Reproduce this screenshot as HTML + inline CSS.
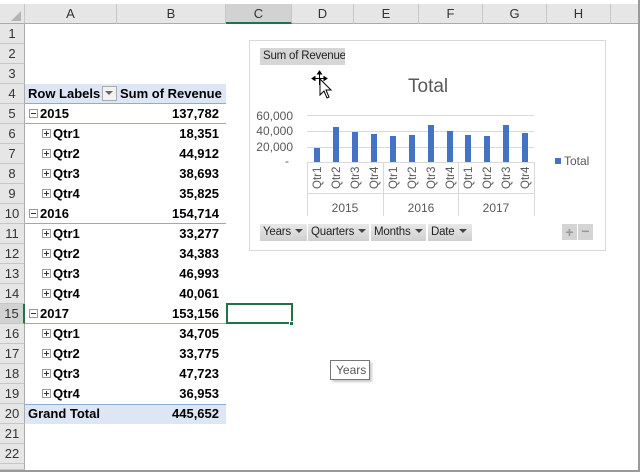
<!DOCTYPE html>
<html><head><meta charset="utf-8"><style>
*{margin:0;padding:0;box-sizing:border-box}
body{width:640px;height:472px;overflow:hidden;background:#fff;font-family:"Liberation Sans",Arial,sans-serif;position:relative}
.a{position:absolute}
.ch{position:absolute;top:4px;height:20px;background:#e6e6e6;border-right:1px solid #c6c6c6;border-bottom:1px solid #ababab;font-size:13px;color:#333;text-align:center;line-height:20px}
.rh{position:absolute;left:0;width:25px;height:20px;background:#e6e6e6;border-bottom:1px solid #c6c6c6;border-right:1px solid #ababab;font-size:13px;color:#333;text-align:center;line-height:20px}
.c{position:absolute;height:20px;line-height:20px;font-size:13px;font-weight:bold;color:#000;white-space:nowrap}
.v{position:absolute;left:117px;width:102px;text-align:right;height:20px;line-height:20px;font-size:13px;font-weight:bold}
.bx{display:inline-block;width:9px;height:9px;border:1px solid #999;position:relative;vertical-align:0;margin-right:2px;background:#fff}
.bx:before{content:"";position:absolute;left:1px;top:3px;width:5px;height:1px;background:#333}
.bx.p:after{content:"";position:absolute;left:3px;top:1px;width:1px;height:5px;background:#333}
.btn{position:absolute;top:224px;height:17px;background:linear-gradient(#e8e8e8,#d0d0d0);font-size:11.5px;line-height:17px;padding-left:3px;color:#222;white-space:nowrap;overflow:hidden;letter-spacing:-0.2px}
.tri{display:inline-block;width:0;height:0;border-left:4px solid transparent;border-right:4px solid transparent;border-top:4px solid #444;margin-left:4px;vertical-align:2px}
</style></head><body>
<div class="ch" style="left:0;width:25px;background:#e6e6e6"></div>
<svg class="a" style="left:10px;top:10px" width="12" height="12"><polygon points="11,1 11,11 1,11" fill="#b4b4b4"/></svg>
<div class="ch" style="left:25px;width:92px">A</div>
<div class="ch" style="left:117px;width:109px">B</div>
<div class="ch" style="left:226px;width:66px;background:#d2d2d2;border-bottom:2px solid #217346">C</div>
<div class="ch" style="left:292px;width:62px">D</div>
<div class="ch" style="left:354px;width:65px">E</div>
<div class="ch" style="left:419px;width:64px">F</div>
<div class="ch" style="left:483px;width:64px">G</div>
<div class="ch" style="left:547px;width:64px">H</div>
<div class="ch" style="left:611px;width:29px"></div>

<div class="rh" style="top:24px">1</div><div class="rh" style="top:44px">2</div><div class="rh" style="top:64px">3</div><div class="rh" style="top:84px">4</div><div class="rh" style="top:104px">5</div><div class="rh" style="top:124px">6</div><div class="rh" style="top:144px">7</div><div class="rh" style="top:164px">8</div><div class="rh" style="top:184px">9</div><div class="rh" style="top:204px">10</div><div class="rh" style="top:224px">11</div><div class="rh" style="top:244px">12</div><div class="rh" style="top:264px">13</div><div class="rh" style="top:284px">14</div><div class="rh" style="top:304px;background:#d2d2d2;border-right:2px solid #217346">15</div><div class="rh" style="top:324px">16</div><div class="rh" style="top:344px">17</div><div class="rh" style="top:364px">18</div><div class="rh" style="top:384px">19</div><div class="rh" style="top:404px">20</div><div class="rh" style="top:424px">21</div><div class="rh" style="top:444px">22</div><div class="rh" style="top:464px;height:6px"></div>
<div class="a" style="left:0;top:470px;width:640px;height:2px;background:#9a9a9a"></div>
<div class="a" style="left:638px;top:0;width:2px;height:472px;background:#9a9a9a"></div>

<div class="a" style="left:25px;top:84px;width:201px;height:20px;background:#dce6f4;border-bottom:1px solid #8ea9db"></div>
<div class="c" style="left:28px;top:84px">Row Labels</div>
<div class="a" style="left:102px;top:86px;width:15px;height:15px;border:1px solid #aaa;background:#f2f2f2"><span class="tri" style="margin:4px 0 0 2px;vertical-align:top;border-top-color:#666"></span></div>
<div class="c" style="left:120px;top:84px">Sum of Revenue</div>

<div class="a" style="left:25px;top:123px;width:201px;height:1px;background:#8ea9db"></div>
<div class="a" style="left:25px;top:223px;width:201px;height:1px;background:#8ea9db"></div>
<div class="a" style="left:25px;top:323px;width:201px;height:1px;background:#8ea9db"></div>
<div class="a" style="left:25px;top:404px;width:201px;height:20px;background:#dce6f4;border-top:1px solid #8ea9db"></div>

<div class="c" style="left:29px;top:104px"><span class="bx"></span>2015</div><div class="v" style="top:104px">137,782</div>
<div class="c" style="left:42px;top:124px"><span class="bx p"></span>Qtr1</div><div class="v" style="top:124px">18,351</div>
<div class="c" style="left:42px;top:144px"><span class="bx p"></span>Qtr2</div><div class="v" style="top:144px">44,912</div>
<div class="c" style="left:42px;top:164px"><span class="bx p"></span>Qtr3</div><div class="v" style="top:164px">38,693</div>
<div class="c" style="left:42px;top:184px"><span class="bx p"></span>Qtr4</div><div class="v" style="top:184px">35,825</div>
<div class="c" style="left:29px;top:204px"><span class="bx"></span>2016</div><div class="v" style="top:204px">154,714</div>
<div class="c" style="left:42px;top:224px"><span class="bx p"></span>Qtr1</div><div class="v" style="top:224px">33,277</div>
<div class="c" style="left:42px;top:244px"><span class="bx p"></span>Qtr2</div><div class="v" style="top:244px">34,383</div>
<div class="c" style="left:42px;top:264px"><span class="bx p"></span>Qtr3</div><div class="v" style="top:264px">46,993</div>
<div class="c" style="left:42px;top:284px"><span class="bx p"></span>Qtr4</div><div class="v" style="top:284px">40,061</div>
<div class="c" style="left:29px;top:304px"><span class="bx"></span>2017</div><div class="v" style="top:304px">153,156</div>
<div class="c" style="left:42px;top:324px"><span class="bx p"></span>Qtr1</div><div class="v" style="top:324px">34,705</div>
<div class="c" style="left:42px;top:344px"><span class="bx p"></span>Qtr2</div><div class="v" style="top:344px">33,775</div>
<div class="c" style="left:42px;top:364px"><span class="bx p"></span>Qtr3</div><div class="v" style="top:364px">47,723</div>
<div class="c" style="left:42px;top:384px"><span class="bx p"></span>Qtr4</div><div class="v" style="top:384px">36,953</div>
<div class="c" style="left:28px;top:404px">Grand Total</div><div class="v" style="top:404px">445,652</div>

<div class="a" style="left:226px;top:303px;width:67px;height:21px;border:2px solid #217346"></div>
<div class="a" style="left:289px;top:321px;width:5px;height:5px;background:#217346;border:1px solid #fff"></div>

<div class="a" style="left:249px;top:40px;width:357px;height:211px;border:1px solid #d9d9d9;background:#fff"></div>
<div class="a" style="left:260px;top:48px;width:85px;height:17px;background:#d6d6d6;font-size:11.5px;line-height:17px;padding-left:3px;color:#222;white-space:nowrap;overflow:hidden;letter-spacing:-0.2px">Sum of Revenue</div>
<div class="a" style="left:408px;top:76px;font-size:19px;color:#595959">Total</div>
<svg class="a" style="left:0;top:0" width="640" height="472">
<g stroke="#d9d9d9" stroke-width="1">
<line x1="307" y1="115.5" x2="534" y2="115.5"/><line x1="307" y1="131.5" x2="534" y2="131.5"/><line x1="307" y1="147.5" x2="534" y2="147.5"/><line x1="307" y1="162.5" x2="534" y2="162.5"/>
<line x1="307.5" y1="162" x2="307.5" y2="216"/><line x1="383.5" y1="162" x2="383.5" y2="216"/><line x1="458.5" y1="162" x2="458.5" y2="216"/><line x1="534.5" y1="162" x2="534.5" y2="216"/>
<line x1="307" y1="193.5" x2="534" y2="193.5"/>
</g>
<g fill="#4472c4">
<rect x="314" y="148" width="6" height="14"/><rect x="333" y="127" width="6" height="35"/><rect x="352" y="132" width="6" height="30"/><rect x="371" y="134" width="6" height="28"/>
<rect x="390" y="136" width="6" height="26"/><rect x="409" y="135" width="6" height="27"/><rect x="428" y="125" width="6" height="37"/><rect x="447" y="131" width="6" height="31"/>
<rect x="465" y="135" width="6" height="27"/><rect x="484" y="136" width="6" height="26"/><rect x="503" y="125" width="6" height="37"/><rect x="522" y="133" width="6" height="29"/>
<rect x="555" y="158" width="6" height="6"/>
</g>
<g font-family="Liberation Sans,Arial,sans-serif" font-size="12" fill="#595959">
<text x="293" y="120" text-anchor="end">60,000</text><text x="293" y="135" text-anchor="end">40,000</text><text x="293" y="151" text-anchor="end">20,000</text><text x="289" y="165" text-anchor="end">-</text>
<text x="564" y="165">Total</text>
<text x="345" y="212" text-anchor="middle">2015</text><text x="421" y="212" text-anchor="middle">2016</text><text x="496" y="212" text-anchor="middle">2017</text>
<g font-size="11.5">
<text transform="translate(321,189) rotate(-90)">Qtr1</text><text transform="translate(340,189) rotate(-90)">Qtr2</text><text transform="translate(359,189) rotate(-90)">Qtr3</text><text transform="translate(378,189) rotate(-90)">Qtr4</text>
<text transform="translate(397,189) rotate(-90)">Qtr1</text><text transform="translate(416,189) rotate(-90)">Qtr2</text><text transform="translate(435,189) rotate(-90)">Qtr3</text><text transform="translate(454,189) rotate(-90)">Qtr4</text>
<text transform="translate(472,189) rotate(-90)">Qtr1</text><text transform="translate(491,189) rotate(-90)">Qtr2</text><text transform="translate(510,189) rotate(-90)">Qtr3</text><text transform="translate(529,189) rotate(-90)">Qtr4</text>
</g></g>
<g stroke="#000" stroke-width="1" fill="#000">
<line x1="319.5" y1="72" x2="319.5" y2="85"/><line x1="313" y1="78.5" x2="326" y2="78.5"/>
<polygon points="319.5,71 317.5,74 321.5,74"/><polygon points="312,78.5 315,76.5 315,80.5"/><polygon points="327,78.5 324,76.5 324,80.5"/>
</g>
<polygon points="320,79 320,95 324,91 327,98 329,97 326,90 331,90" fill="#fff" stroke="#000" stroke-width="1"/>
</svg>
<div class="btn" style="left:260px;width:47px">Years<span class="tri"></span></div>
<div class="btn" style="left:308px;width:61px">Quarters<span class="tri"></span></div>
<div class="btn" style="left:371px;width:55px">Months<span class="tri"></span></div>
<div class="btn" style="left:428px;width:44px">Date<span class="tri"></span></div>
<div class="a" style="left:562px;top:224px;width:15px;height:16px;background:#d4d4d4;color:#999;font-size:14px;text-align:center;line-height:16px;font-weight:bold">+</div>
<div class="a" style="left:578px;top:224px;width:15px;height:16px;background:#d4d4d4;color:#999;font-size:14px;text-align:center;line-height:15px;font-weight:bold">−</div>

<div class="a" style="left:330px;top:360px;width:40px;height:20px;border:1px solid #767676;background:#fff;font-size:12px;line-height:18px;color:#575757;padding-left:5px;box-shadow:2px 2px 2px #ccc">Years</div>
</body></html>
